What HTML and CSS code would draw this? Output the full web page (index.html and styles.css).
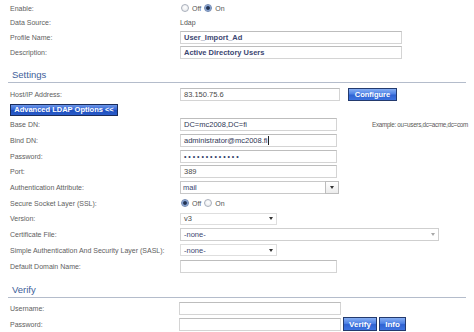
FILE: index.html
```html
<!DOCTYPE html>
<html>
<head>
<meta charset="utf-8">
<link rel="stylesheet" href="styles.css">
</head>
<body>
<div class="page">
  <div class="row h-enable">
    <div class="lbl">Enable:</div>
    <div class="val radios"><span class="radio"></span><span class="rt">Off</span><span class="radio on"></span><span class="rt">On</span></div>
  </div>
  <div class="row h-ds">
    <div class="lbl">Data Source:</div>
    <div class="val">Ldap</div>
  </div>
  <div class="row h-pn">
    <div class="lbl">Profile Name:</div>
    <div class="val"><div class="input w222 bold">User_Import_Ad</div></div>
  </div>
  <div class="row h-desc">
    <div class="lbl">Description:</div>
    <div class="val"><div class="input w222 bold">Active Directory Users</div></div>
  </div>

  <div class="head head-settings">Settings</div>

  <div class="row h-host">
    <div class="lbl">Host/IP Address:</div>
    <div class="val"><div class="input w160">83.150.75.6</div><div class="btn btn-conf">Configure</div></div>
  </div>
  <div class="row h-adv">
    <div class="btn btn-adv">Advanced LDAP Options &lt;&lt;</div>
  </div>
  <div class="row r">
    <div class="lbl">Base DN:</div>
    <div class="val"><div class="input w157 navy">DC=mc2008,DC=fi</div><div class="example">Example: ou=users,dc=acme,dc=com</div></div>
  </div>
  <div class="row r">
    <div class="lbl">Bind DN:</div>
    <div class="val"><div class="input w157 navy">administrator@mc2008.fi<span class="caret"></span></div></div>
  </div>
  <div class="row r">
    <div class="lbl">Password:</div>
    <div class="val"><div class="input w157 dots">•••••••••••••</div></div>
  </div>
  <div class="row r">
    <div class="lbl">Port:</div>
    <div class="val"><div class="input w157">389</div></div>
  </div>
  <div class="row r">
    <div class="lbl">Authentication Attribute:</div>
    <div class="val"><div class="combo"><div class="combo-text">mail</div><div class="combo-btn"><span class="arrow"></span></div></div></div>
  </div>
  <div class="row r">
    <div class="lbl">Secure Socket Layer (SSL):</div>
    <div class="val radios"><span class="radio on"></span><span class="rt">Off</span><span class="radio"></span><span class="rt">On</span></div>
  </div>
  <div class="row r">
    <div class="lbl">Version:</div>
    <div class="val"><div class="select w97">v3<span class="arrow"></span></div></div>
  </div>
  <div class="row r">
    <div class="lbl">Certificate File:</div>
    <div class="val"><div class="select w259 blue">-none-<span class="arrow light"></span></div></div>
  </div>
  <div class="row r">
    <div class="lbl">Simple Authentication And Security Layer (SASL):</div>
    <div class="val"><div class="select w97 blue">-none-<span class="arrow"></span></div></div>
  </div>
  <div class="row r">
    <div class="lbl">Default Domain Name:</div>
    <div class="val"><div class="input w157"></div></div>
  </div>

  <div class="head head-verify">Verify</div>

  <div class="row h-user">
    <div class="lbl">Username:</div>
    <div class="val"><div class="input w162"></div></div>
  </div>
  <div class="row h-pass">
    <div class="lbl">Password:</div>
    <div class="val"><div class="input w162"></div><div class="btn btn-verify">Verify</div><div class="btn btn-info">Info</div></div>
  </div>
</div>
</body>
</html>
```

FILE: styles.css
```css
html, body {
  margin: 0;
  padding: 0;
  background: #ffffff;
}

body {
  font-family: "Liberation Sans", Arial, sans-serif;
  font-size: 7.5px;
  color: #5a5a5a;
}

.page {
  width: 474px;
  height: 332px;
  box-sizing: border-box;
  padding: 1px 8px 0 8px;
  overflow: hidden;
}

.row {
  display: flex;
  align-items: center;
  height: 15.7px;
}

.h-enable { height: 14px; }
.h-ds { height: 14px; }
.h-pn { height: 16px; }
.h-desc { height: 15px; }
.h-host { height: 16px; margin-top: 3px; }
.h-adv { height: 15px; }
.h-user { height: 16px; margin-top: 3px; }
.h-pass { height: 15px; }

.lbl {
  width: 172px;
  flex: none;
  padding-left: 2px;
  box-sizing: border-box;
  font-size: 7px;
  color: #5e5e5e;
  white-space: nowrap;
}

.val {
  display: flex;
  align-items: center;
  color: #555;
  font-size: 7px;
}

.radios { padding-left: 1px; }

.radio {
  width: 6px;
  height: 6px;
  border-radius: 50%;
  border: 1px solid #a9b0bb;
  background: radial-gradient(circle at 50% 40%, #ffffff 0, #e4e6ea 100%);
  flex: none;
}

.radio.on {
  border-color: #6d86b0;
  background: radial-gradient(circle at 50% 50%, #23324f 0, #23324f 1.4px, #6f8fc4 2.2px, #d6e2f4 3.5px);
}

.rt {
  margin: 0 3px 0 3px;
  color: #555;
}

.input {
  height: 13px;
  box-sizing: border-box;
  border: 1px solid #d4d4d4;
  border-top-color: #bdbdbd;
  background: #fff;
  padding: 0 3px;
  display: flex;
  align-items: center;
  color: #4a4a4a;
  font-size: 7.5px;
  flex: none;
}

.w222 { width: 222px; }
.w160 { width: 160px; }
.w157 { width: 157px; }
.w162 { width: 162px; margin-left: -1px; }

.bold {
  font-weight: bold;
  color: #3b4670;
}

.navy { color: #2f3756; }

.dots {
  color: #2e3a66;
  letter-spacing: 1.9px;
  font-size: 7px;
}

.caret {
  display: inline-block;
  width: 1px;
  height: 9px;
  background: #222;
  margin-left: 0.5px;
}

.example {
  margin-left: 35px;
  color: #5a5a5a;
  white-space: nowrap;
  font-size: 6.3px;
  letter-spacing: -0.3px;
  flex: none;
}

.btn {
  box-sizing: border-box;
  display: flex;
  align-items: center;
  justify-content: center;
  color: #ffffff;
  font-weight: bold;
  font-size: 7.5px;
  border: 1px solid #233a6e;
  background: linear-gradient(#86aef2 0, #4f82e6 45%, #2f62d2 55%, #3e74e0 100%);
  white-space: nowrap;
  flex: none;
}

.btn-conf {
  width: 49px;
  height: 13px;
  margin-left: 8px;
}

.btn-adv {
  width: 108px;
  height: 12px;
  margin-left: 2px;
  border-color: #1a2c5a;
  background: linear-gradient(#6c96e8 0, #3466d6 45%, #1f4fbd 55%, #2a5cca 100%);
}

.btn-verify {
  width: 34px;
  height: 14px;
  margin-left: 2px;
  font-size: 8px;
}

.btn-info {
  width: 27px;
  height: 14px;
  margin-left: 2px;
  font-size: 8px;
}

.combo {
  display: flex;
  width: 159px;
  height: 13px;
  font-size: 7.5px;
}

.combo-text {
  flex: 1;
  box-sizing: border-box;
  border: 1px solid #c8c8c8;
  border-right: none;
  background: #fff;
  padding: 0 2px;
  display: flex;
  align-items: center;
  color: #3b4670;
}

.combo-btn {
  width: 14px;
  box-sizing: border-box;
  border: 1px solid #bdbdbd;
  background: linear-gradient(#ffffff, #ececec);
  display: flex;
  align-items: center;
  justify-content: center;
}

.select {
  height: 12px;
  box-sizing: border-box;
  border: 1px solid #dedede;
  background: #fff;
  display: flex;
  align-items: center;
  justify-content: space-between;
  padding: 0 3px 0 3px;
  color: #4a4a4a;
  font-size: 7.5px;
  flex: none;
}

.w97 { width: 97px; }
.w259 { width: 259px; height: 13px; border-color: #cfcfcf; }

.blue { color: #3b4670; }

.arrow {
  width: 0;
  height: 0;
  border-left: 2.5px solid transparent;
  border-right: 2.5px solid transparent;
  border-top: 3px solid #333;
}

.arrow.light { border-top-color: #a8a8a8; }

.head {
  box-sizing: border-box;
  height: 16px;
  border-bottom: 1.5px solid #b4bccb;
  padding-left: 4px;
  display: flex;
  align-items: center;
  font-size: 9.5px;
  color: #40609a;
}

.head-settings { margin-top: 7px; }
.head-verify { margin-top: 8px; }
```
